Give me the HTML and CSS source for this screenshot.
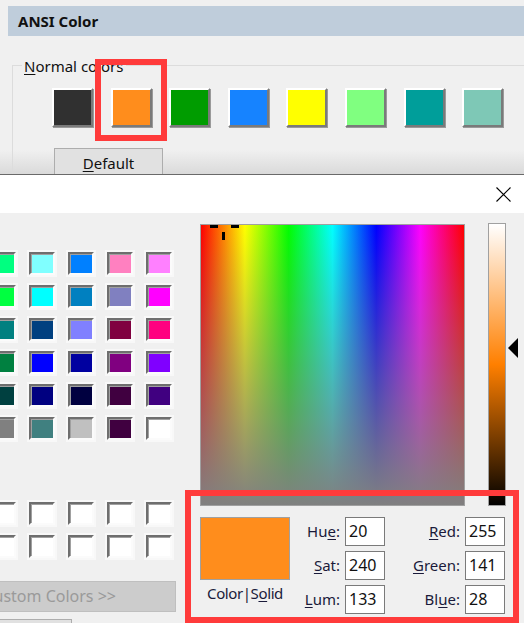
FILE: index.html
```html
<!DOCTYPE html>
<html>
<head>
<meta charset="utf-8">
<link rel="stylesheet" href="styles.css">
</head>
<body>
<div class="top">
  <div class="header">ANSI Color</div>
  <div class="group">
    <div class="legend"><u>N</u>ormal colors</div>
    <div class="swatches">
      <div class="swatch" style="background:#303030"></div>
      <div class="swatch" style="background:#ff8d1c"></div>
      <div class="swatch" style="background:#009c00"></div>
      <div class="swatch" style="background:#1683ff"></div>
      <div class="swatch" style="background:#ffff00"></div>
      <div class="swatch" style="background:#80ff80"></div>
      <div class="swatch" style="background:#009e9a"></div>
      <div class="swatch" style="background:#7ec8b6"></div>
    </div>
    <div class="btn-default"><span><u>D</u>efault</span></div>
  </div>
</div>
<div class="dialog-title">
  <svg class="close" width="15" height="15" viewBox="0 0 15 15"><path d="M0.5 0.5 L14.5 14.5 M14.5 0.5 L0.5 14.5" stroke="#000" stroke-width="1.1" fill="none"/></svg>
</div>
<div class="dialog-body">
  <div class="left">
    <div class="cells basic">
      <div class="cell" style="background:#00ff80"></div>
      <div class="cell" style="background:#80ffff"></div>
      <div class="cell" style="background:#0080ff"></div>
      <div class="cell" style="background:#ff80c0"></div>
      <div class="cell" style="background:#ff80ff"></div>
      <div class="cell" style="background:#00ff40"></div>
      <div class="cell" style="background:#00ffff"></div>
      <div class="cell" style="background:#0080c0"></div>
      <div class="cell" style="background:#8080c0"></div>
      <div class="cell" style="background:#ff00ff"></div>
      <div class="cell" style="background:#008080"></div>
      <div class="cell" style="background:#004080"></div>
      <div class="cell" style="background:#8080ff"></div>
      <div class="cell" style="background:#800040"></div>
      <div class="cell" style="background:#ff0080"></div>
      <div class="cell" style="background:#008040"></div>
      <div class="cell" style="background:#0000ff"></div>
      <div class="cell" style="background:#0000a0"></div>
      <div class="cell" style="background:#800080"></div>
      <div class="cell" style="background:#8000ff"></div>
      <div class="cell" style="background:#004040"></div>
      <div class="cell" style="background:#000080"></div>
      <div class="cell" style="background:#000040"></div>
      <div class="cell" style="background:#400040"></div>
      <div class="cell" style="background:#400080"></div>
      <div class="cell" style="background:#808080"></div>
      <div class="cell" style="background:#408080"></div>
      <div class="cell" style="background:#c0c0c0"></div>
      <div class="cell" style="background:#400040"></div>
      <div class="cell" style="background:#ffffff"></div>
    </div>
    <div class="cells custom">
      <div class="cell"></div><div class="cell"></div><div class="cell"></div><div class="cell"></div><div class="cell"></div>
      <div class="cell"></div><div class="cell"></div><div class="cell"></div><div class="cell"></div><div class="cell"></div>
    </div>
    <div class="btn-define">Define Custom Colors &gt;&gt;</div>
    <div class="btn-ok"></div>
  </div>
  <div class="right">
    <div class="spectrum-row">
      <div class="spectrum">
        <div class="cross">
          <span class="ch ch-l"></span><span class="ch ch-r"></span><span class="ch ch-b"></span>
        </div>
      </div>
      <div class="lum"></div>
      <div class="arrow-col"><div class="arrow"></div></div>
    </div>
    <div class="bottom">
      <div class="solid-col">
        <div class="solid"></div>
        <div class="solid-label">Color|S<u>o</u>lid</div>
      </div>
      <div class="fields">
        <div class="lbl">Hu<u>e</u>:</div><div class="inp">20</div>
        <div class="lbl"><u>R</u>ed:</div><div class="inp">255</div>
        <div class="lbl"><u>S</u>at:</div><div class="inp">240</div>
        <div class="lbl"><u>G</u>reen:</div><div class="inp">141</div>
        <div class="lbl"><u>L</u>um:</div><div class="inp">133</div>
        <div class="lbl">Bl<u>u</u>e:</div><div class="inp">28</div>
      </div>
    </div>
  </div>
</div>
<div class="hl hl-swatch"></div>
<div class="hl hl-panel"></div>
</body>
</html>
```
FILE: styles.css
```css
* { box-sizing: border-box; }
html, body {
  margin: 0;
  padding: 0;
}
body {
  width: 524px;
  height: 623px;
  overflow: hidden;
  position: relative;
  font-family: "Noto Sans", "Open Sans", sans-serif;
  font-size: 15px;
  color: #111;
  background: #f0f0f0;
}
u { text-decoration: underline; text-underline-offset: 2px; }

.top {
  height: 175px;
  padding: 6px 0 0 8px;
  background: linear-gradient(to bottom, #f0f0f0 150px, #dadada 174px);
  border-bottom: 1px solid #6a6a6a;
  overflow: hidden;
}
.header {
  height: 30px;
  background: #bfcddb;
  font-weight: bold;
  font-size: 15px;
  line-height: 30px;
  padding-left: 10px;
  color: #111;
}
.group {
  margin: 29px 0 0 4px;
  border-top: 1px solid #dcdcdc;
  border-left: 1px solid #dcdcdc;
  height: 200px;
}
.legend {
  display: block;
  width: max-content;
  margin: -10px 0 0 9px;
  padding: 0 2px;
  line-height: 20px;
  background: #f0f0f0;
}
.swatches {
  display: flex;
  gap: 17.6px;
  margin: 12px 0 0 39px;
}
.swatch {
  width: 41px;
  height: 39px;
  border: 2px solid;
  border-color: #ffffff #7a7a7a #7a7a7a #ffffff;
  box-shadow: 1px 1px 0 #9a9a9a;
}
.btn-default {
  margin: 21px 0 0 41px;
  width: 109px;
  height: 31px;
  border: 1px solid #adadad;
  background: #e1e1e1;
  display: flex;
  justify-content: center;
  padding-top: 4px;
  font-size: 15px;
}

.dialog-title {
  height: 38px;
  background: #fff;
  display: flex;
  justify-content: flex-end;
  align-items: center;
  padding-right: 13px;
}

.dialog-body {
  display: flex;
  height: 410px;
}
.left {
  width: 182px;
  margin-left: -10px;
  padding-top: 39px;
  flex: none;
}
.cells {
  display: grid;
  grid-template-columns: repeat(5, 26px);
  grid-auto-rows: 23px;
  column-gap: 13px;
  row-gap: 10px;
}
.custom { margin-top: 62px; }
.cell {
  border: 2px solid;
  border-color: #6e6e6e #fbfbfb #fbfbfb #6e6e6e;
  background: #fff;
  box-shadow: 0 0 0 2px #f8f8f8, inset 1px 1px 0 #a0a0a0;
}
.btn-define {
  margin: 23px 0 0 -120px;
  width: 306px;
  height: 31px;
  background: #cccccc;
  border: 1px solid #bfbfbf;
  color: #9a9a9a;
  font-size: 16px;
  line-height: 29px;
  text-align: center;
  white-space: nowrap;
}
.btn-ok {
  margin: 7px 0 0 -120px;
  width: 202px;
  height: 31px;
  border: 1px solid #adadad;
  background: #e1e1e1;
}

.right {
  margin-left: 28px;
  padding-top: 11px;
}
.spectrum-row {
  display: flex;
}
.spectrum {
  width: 265px;
  height: 282px;
  border: 1px solid #a0a0a0;
  background:
    linear-gradient(to bottom, rgba(128,128,128,0), #808080),
    linear-gradient(to right, #ff0000 0%, #ffff00 16.67%, #00ff00 33.33%, #00ffff 50%, #0000ff 66.67%, #ff00ff 83.33%, #ff0000 100%);
  position: relative;
}
.cross { position: absolute; left: 22px; top: 0; }
.ch { position: absolute; background: #000; }
.ch-l { left: -13px; top: 0; width: 8px; height: 3px; }
.ch-r { left: 8px; top: 0; width: 8px; height: 3px; }
.ch-b { left: -1px; top: 7px; width: 3px; height: 8px; }
.lum {
  margin: -1px 0 0 23px;
  width: 18px;
  height: 283px;
  border: 1px solid #a0a0a0;
  background: linear-gradient(to bottom, #ffffff, hsl(30, 100%, 50%) 50%, #000000);
}
.arrow-col { margin-left: 2px; }
.arrow {
  margin-top: 114px;
  width: 0;
  height: 0;
  border-top: 10px solid transparent;
  border-bottom: 10px solid transparent;
  border-right: 10px solid #000;
}

.bottom {
  display: flex;
  margin-top: 11px;
}
.solid-col { width: 90px; }
.solid {
  width: 90px;
  height: 63px;
  background: #ff8d1c;
  border: 1px solid #a0a0a0;
}
.solid-label {
  text-align: center;
  margin-top: 3px;
  line-height: 20px;
  font-size: 15px;
  letter-spacing: -0.4px;
  color: #1a1a3a;
  white-space: nowrap;
}
.fields {
  display: grid;
  grid-template-columns: 50px 40px 70px 40px;
  grid-auto-rows: 29px;
  column-gap: 5px;
  row-gap: 5px;
}
.lbl {
  text-align: right;
  line-height: 29px;
  font-size: 15px;
  color: #1a1a3a;
  white-space: nowrap;
}
.inp {
  background: #fff;
  border: 1px solid #7a7a7a;
  line-height: 27px;
  padding-left: 3px;
  font-size: 16px;
  color: #111;
}

.hl {
  position: absolute;
  border: 6px solid #ff3b3b;
}
.hl-swatch { left: 95px; top: 59px; width: 72px; height: 82px; }
.hl-panel { left: 185px; top: 490px; width: 334px; height: 133px; }
```
